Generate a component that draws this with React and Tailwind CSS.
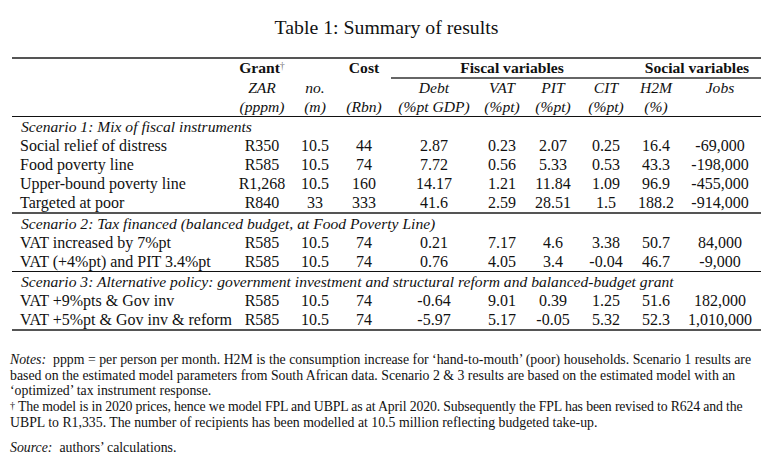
import React from "react";

const G = "grid grid-cols-[219px_62px_44px_54px_86px_50px_52px_54px_46px_82px]";

const s1 = [
  ["Social relief of distress", "R350", "10.5", "44", "2.87", "0.23", "2.07", "0.25", "16.4", "-69,000"],
  ["Food poverty line", "R585", "10.5", "74", "7.72", "0.56", "5.33", "0.53", "43.3", "-198,000"],
  ["Upper-bound poverty line", "R1,268", "10.5", "160", "14.17", "1.21", "11.84", "1.09", "96.9", "-455,000"],
  ["Targeted at poor", "R840", "33", "333", "41.6", "2.59", "28.51", "1.5", "188.2", "-914,000"],
];
const s2 = [
  ["VAT increased by 7%pt", "R585", "10.5", "74", "0.21", "7.17", "4.6", "3.38", "50.7", "84,000"],
  ["VAT (+4%pt) and PIT 3.4%pt", "R585", "10.5", "74", "0.76", "4.05", "3.4", "-0.04", "46.7", "-9,000"],
];
const s3 = [
  ["VAT +9%pts & Gov inv", "R585", "10.5", "74", "-0.64", "9.01", "0.39", "1.25", "51.6", "182,000"],
  ["VAT +5%pt & Gov inv & reform", "R585", "10.5", "74", "-5.97", "5.17", "-0.05", "5.32", "52.3", "1,010,000"],
];

function Row({ r }) {
  return (
    <div className={G + " h-[19px] items-center leading-[19px] text-[16px]"}>
      <div className="pl-[8px] whitespace-nowrap">{r[0]}</div>
      {r.slice(1).map((v, i) => (
        <div key={i} className="text-center whitespace-nowrap">{v}</div>
      ))}
    </div>
  );
}

function Title({ children }) {
  return (
    <div className="h-[19px] leading-[19px] pl-[9px] italic whitespace-nowrap">{children}</div>
  );
}

export default function App() {
  return (
    <div className="w-[773px] h-[464px] bg-white text-[#111] font-['Liberation_Serif',serif] overflow-hidden">
      <div className="pt-[14px] h-[57px] text-center text-[19.8px] leading-[26px]">Table 1: Summary of results</div>
      <div className="ml-[12px] w-[749px] text-[15.6px]">
        <div className="h-[2px] bg-[#555]" />
        <div className={G + " h-[20px] leading-[18px] font-bold"}>
          <div />
          <div className="text-center">
            Grant<sup className="text-[10px] font-normal text-[#777] relative -top-[4px]">†</sup>
          </div>
          <div />
          <div className="text-center">Cost</div>
          <div className="col-span-4 text-center border-b-[2px] border-[#666]">Fiscal variables</div>
          <div className="col-span-2 text-center border-b-[2px] border-[#666]">Social variables</div>
        </div>
        <div className={G + " h-[18px] leading-[18px] italic"}>
          <div />
          <div className="text-center">ZAR</div>
          <div className="text-center">no.</div>
          <div />
          <div className="text-center">Debt</div>
          <div className="text-center">VAT</div>
          <div className="text-center">PIT</div>
          <div className="text-center">CIT</div>
          <div className="text-center">H2M</div>
          <div className="text-center">Jobs</div>
        </div>
        <div className={G + " h-[19px] leading-[19px] italic"}>
          <div />
          <div className="text-center">(pppm)</div>
          <div className="text-center">(m)</div>
          <div className="text-center">(Rbn)</div>
          <div className="text-center whitespace-nowrap">(%pt GDP)</div>
          <div className="text-center">(%pt)</div>
          <div className="text-center">(%pt)</div>
          <div className="text-center">(%pt)</div>
          <div className="text-center">(%)</div>
          <div />
        </div>
        <div className="h-[1px] bg-[#111]" />
        <Title>Scenario 1: Mix of fiscal instruments</Title>
        {s1.map((r, i) => <Row key={i} r={r} />)}
        <div className="h-[2px] bg-[#555]" />
        <Title>Scenario 2: Tax financed (balanced budget, at Food Poverty Line)</Title>
        {s2.map((r, i) => <Row key={i} r={r} />)}
        <div className="h-[1px] bg-[#111]" />
        <Title>Scenario 3: Alternative policy: government investment and structural reform and balanced-budget grant</Title>
        {s3.map((r, i) => <Row key={i} r={r} />)}
        <div className="h-[2px] bg-[#555]" />
      </div>
      <div className="mt-[21px] pl-[10px] text-[13.8px] leading-[15.7px] whitespace-nowrap">
        <div><span className="italic">Notes:</span><span className="ml-[7px]">pppm = per person per month. H2M is the consumption increase for ‘hand-to-mouth’ (poor) households. Scenario 1 results are</span></div>
        <div>based on the estimated model parameters from South African data. Scenario 2 &amp; 3 results are based on the estimated model with an</div>
        <div>‘optimized’ tax instrument response.</div>
        <div className="tracking-[-0.15px]"><sup className="text-[10px] relative -top-[2px]">†</sup> The model is in 2020 prices, hence we model FPL and UBPL as at April 2020. Subsequently the FPL has been revised to R624 and the</div>
        <div>UBPL to R1,335. The number of recipients has been modelled at 10.5 million reflecting budgeted take-up.</div>
        <div className="mt-[9px]"><span className="italic">Source:</span><span className="ml-[7px]">authors’ calculations.</span></div>
      </div>
    </div>
  );
}
